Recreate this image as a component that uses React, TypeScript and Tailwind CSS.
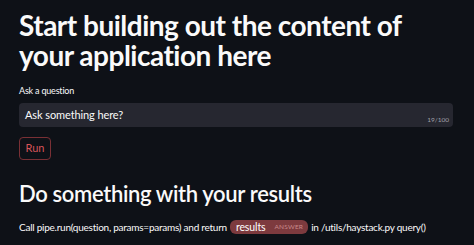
import React from "react";

export default function App() {
  return (
    <div
      className="w-[474px] h-[245px] overflow-hidden bg-[#0e1117] text-[#fafafa] px-[19px] pt-[10px]"
      style={{ fontFamily: "Lato, 'Noto Sans', sans-serif" }}
    >
      <h1 className="text-[28px] leading-[30px] font-bold tracking-[-0.5px]">
        Start building out the content of
        <br />
        your application here
      </h1>
      <div className="mt-[15px] text-[9px] leading-[12px] tracking-[-0.2px]">Ask a question</div>
      <div className="mt-[6px] w-[434px] h-[24px] bg-[#262730] rounded-[4px] relative flex items-center pl-[6px]">
        <span className="text-[11px] tracking-[-0.1px]">Ask something here?</span>
        <span className="absolute right-[4px] bottom-[2px] text-[6.5px] text-[#a0a0a8]">19/100</span>
      </div>
      <button className="mt-[10px] w-[32px] h-[23px] border border-[#7a3035] rounded-[4px] text-[11px] text-[#d85459] flex items-center justify-center">
        Run
      </button>
      <h2 className="mt-[21px] text-[22px] leading-[26px] font-semibold tracking-[-0.35px]">
        Do something with your results
      </h2>
      <p className="mt-[12px] text-[10px] leading-[16px] flex items-center whitespace-nowrap tracking-[-0.25px]">
        <span>Call pipe.run(question, params=params) and return</span>
        <span className="mx-[3px] inline-flex items-center h-[14px] rounded-[6px] bg-[#7d3a3e] pl-[6px] pr-[5px]">
          <span className="text-[10.5px] text-white tracking-[-0.1px]">results</span>
          <span className="ml-[9px] text-[6.5px] text-[#c98a8c] tracking-[0.2px]">ANSWER</span>
        </span>
        <span>in /utils/haystack.py query()</span>
      </p>
    </div>
  );
}
